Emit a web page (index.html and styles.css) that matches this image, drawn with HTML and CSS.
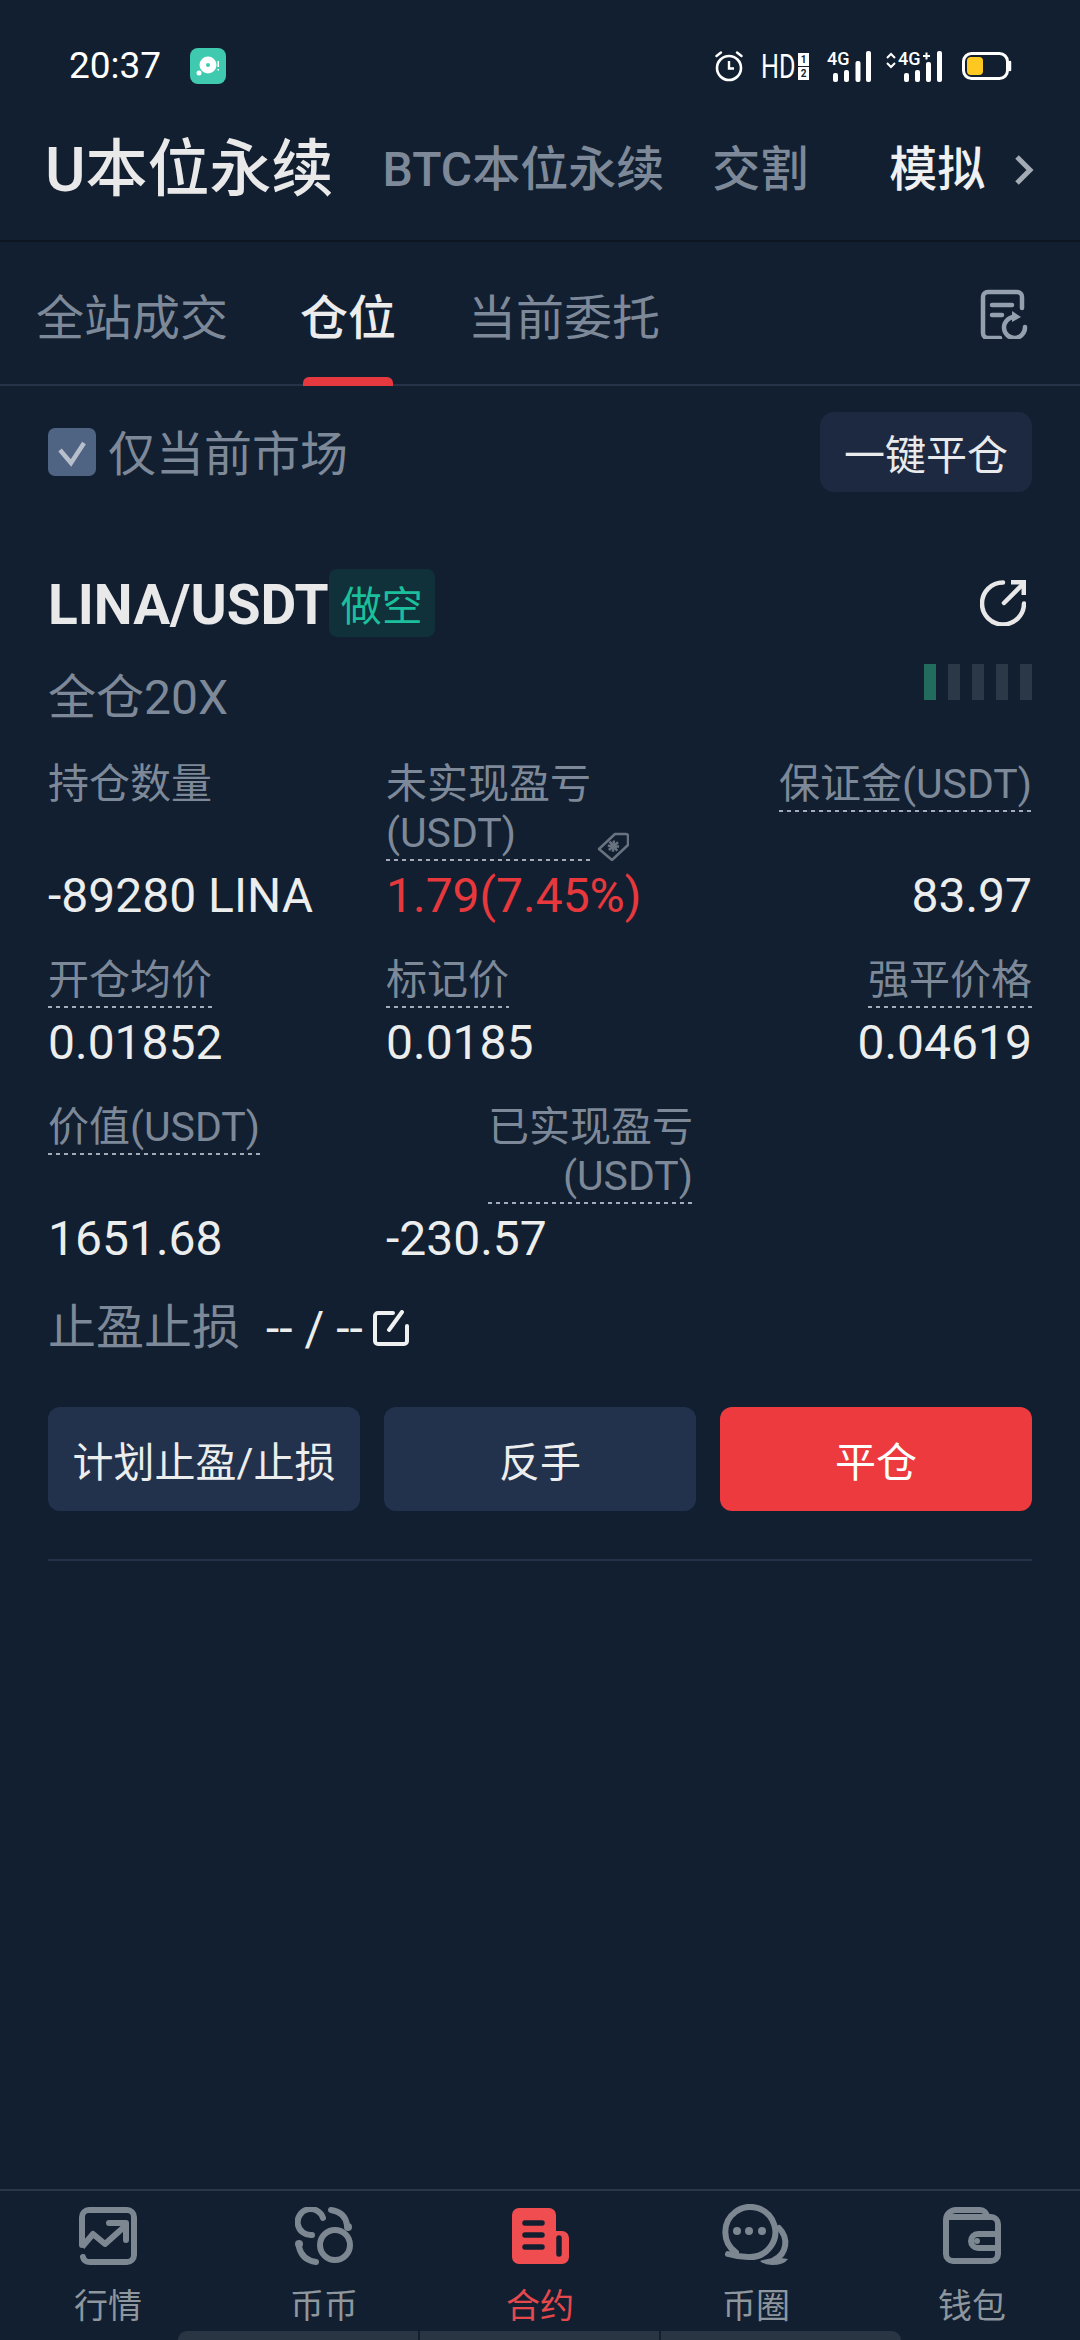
FILE: index.html
```html
<!DOCTYPE html>
<html lang="zh">
<head>
<meta charset="utf-8">
<title>仓位</title>
<link rel="stylesheet" href="styles.css">
</head>
<body>
<div class="page">
  <header class="status">
    <div class="status-left">
      <span class="time">20:37</span>
      <svg class="app-icon" viewBox="0 0 36 36"><rect width="36" height="36" rx="8" fill="#3fcab0"/><circle cx="18" cy="17" r="8.5" fill="#fff"/><circle cx="18" cy="17" r="2" fill="#3fcab0"/><circle cx="9" cy="25" r="2.5" fill="#fff"/><rect x="27.500" y="13" width="1.500" height="6" fill="#fff"/><rect x="27.500" y="21" width="1.500" height="1.500" fill="#fff"/></svg>
    </div>
    <div class="status-right">
      <svg class="ico-alarm" viewBox="0 0 28 32"><circle cx="14" cy="18" r="12" fill="none" stroke="#fff" stroke-width="2.600"/><path d="M14 11v7.500h5" fill="none" stroke="#fff" stroke-width="2.400"/><path d="M1.500 6 6 2.500M26.500 6 22 2.500" stroke="#fff" stroke-width="2.400" stroke-linecap="round"/></svg>
      <div class="hd"><span class="hd-text">HD</span><div class="sim"><b>1</b><b>2</b></div></div>
      <div class="sig sig-a">
        <span class="net">4G</span>
        <svg viewBox="0 0 46 31"><g fill="#fff"><rect x="6" y="22" width="5" height="9" rx="2"/><rect x="17" y="19" width="5" height="12" rx="2"/><rect x="28.500" y="10" width="5" height="21" rx="2"/><rect x="39" y="0" width="5" height="31" rx="2"/></g></svg>
      </div>
      <div class="sig sig-b">
        <span class="net">4G</span>
        <svg viewBox="0 0 58 31"><path d="M1 7 5 3l4 4M1 12l4 4 4-4" fill="none" stroke="#fff" stroke-width="2"/><path d="M37 5h7M40.500 1.500v7" stroke="#fff" stroke-width="2"/><g fill="#fff"><rect x="18" y="22" width="5" height="9" rx="2"/><rect x="29" y="19" width="5" height="12" rx="2"/><rect x="40" y="11" width="5" height="20" rx="2"/><rect x="51" y="0" width="5" height="31" rx="2"/></g></svg>
      </div>
      <svg class="ico-bat" viewBox="0 0 50 28"><rect x="1.500" y="1.500" width="44" height="25" rx="8" fill="none" stroke="#fff" stroke-width="3"/><rect x="5" y="5" width="16" height="18" rx="4" fill="#fdc921"/><path d="M48 10v8" stroke="#fff" stroke-width="2.500" stroke-linecap="round"/></svg>
    </div>
  </header>

  <nav class="topnav">
    <span class="top-main">U本位永续</span>
    <span class="top-item top-btc">BTC本位永续</span>
    <span class="top-item top-jg">交割</span>
    <span class="top-sim">模拟</span>
    <svg class="top-chev" viewBox="0 0 22 34"><path d="M4 4l13 13L4 30" fill="none" stroke="#a3abb5" stroke-width="5"/></svg>
  </nav>

  <div class="tabs">
    <div class="tab"><span>全站成交</span><i class="tab-bar"></i></div>
    <div class="tab tab-on"><span>仓位</span><i class="tab-bar"></i></div>
    <div class="tab"><span>当前委托</span><i class="tab-bar"></i></div>
    <svg class="tab-ico" viewBox="0 0 48 50"><g fill="none" stroke="#94a0ae" stroke-width="4.500" stroke-linecap="round" stroke-linejoin="round"><path d="M42 19V8a5 5 0 0 0-5-5H8a5 5 0 0 0-5 5v36a5 5 0 0 0 5 5h12"/><path d="M12 16h20M12 26h10"/><path d="M45 38a10.500 10.500 0 1 1-11-10"/></g><path d="M32 22l9 6-9 5z" fill="#94a0ae"/></svg>
  </div>

  <div class="filter">
    <label class="check">
      <svg class="check-box" viewBox="0 0 48 48"><rect width="48" height="48" rx="7" fill="#4f6382"/><path d="M12 22l11 13 13-20" fill="none" stroke="#b7bfca" stroke-width="4.500"/></svg>
      <span class="check-text">仅当前市场</span>
    </label>
    <button class="close-all">一键平仓</button>
  </div>

  <section class="pos">
    <div class="pos-head">
      <div class="pair"><span class="pair-name">LINA/USDT</span><span class="badge">做空</span></div>
      <svg class="share" viewBox="0 0 46 46"><g fill="none" stroke="#e8e8e8" stroke-width="4.500" stroke-linecap="round"><path d="M23 2.500A21 21 0 1 0 44 23.500"/><path d="M24 23 43 4"/></g><path d="M31 0h15v15h-4.500V4.500H31z" fill="#e8e8e8"/></svg>
    </div>
    <div class="lev-row">
      <span class="lev">全仓20X</span>
      <div class="risk"><i class="risk-on"></i><i></i><i></i><i></i><i></i></div>
    </div>

    <div class="row row-first">
      <div class="cell cell-a"><span class="lab">持仓数量</span><span class="val">-89280 LINA</span></div>
      <div class="cell cell-b">
        <div class="lab-wrap"><span class="lab dash">未实现盈亏<br>(USDT)</span>
          <svg class="tag" viewBox="0 0 32 30"><g fill="none" stroke="#68737f" stroke-width="2.500" stroke-linejoin="round"><path d="M2 18 18 3h11a2 2 0 0 1 2 2v9L15 29z"/></g><path d="M11 11l8 8M19 11l-8 8M15 9v12M9 15h12" transform="rotate(-40 15 15) translate(1 1)" stroke="#68737f" stroke-width="2.500"/></svg>
        </div>
        <span class="val red">1.79(7.45%)</span>
      </div>
      <div class="cell cell-c"><span class="lab dash">保证金(USDT)</span><span class="val">83.97</span></div>
    </div>

    <div class="row">
      <div class="cell cell-a"><span class="lab dash">开仓均价</span><span class="val">0.01852</span></div>
      <div class="cell cell-b"><span class="lab dash">标记价</span><span class="val">0.0185</span></div>
      <div class="cell cell-c"><span class="lab dash">强平价格</span><span class="val">0.04619</span></div>
    </div>

    <div class="row">
      <div class="cell cell-a"><span class="lab dash">价值(USDT)</span><span class="val">1651.68</span></div>
      <div class="cell cell-b"><span class="lab dash lab-shift">已实现盈亏<br>(USDT)</span><span class="val">-230.57</span></div>
      <div class="cell cell-c"></div>
    </div>

    <div class="stop">
      <span class="stop-lab">止盈止损</span>
      <span class="stop-val">-- / --</span>
      <svg class="edit" viewBox="0 0 36 36"><g fill="none" stroke="#eef0f2" stroke-width="4" stroke-linecap="round"><path d="M20 3H5a3 3 0 0 0-3 3v25a3 3 0 0 0 3 3h26a3 3 0 0 0 3-3V16"/><path d="M16 20 29 2"/></g></svg>
    </div>

    <div class="actions">
      <button class="act">计划止盈/止损</button>
      <button class="act">反手</button>
      <button class="act act-red">平仓</button>
    </div>
    <div class="pos-line"></div>
  </section>

  <div class="spacer"></div>

  <footer class="nav">
    <div class="nav-items">
      <div class="nav-item">
        <svg class="nav-ico" viewBox="0 0 58 58"><g fill="none" stroke="#7c8791" stroke-width="6" stroke-linecap="round" stroke-linejoin="round"><path d="M3 38V10a7 7 0 0 1 7-7h38a7 7 0 0 1 7 7v38a7 7 0 0 1-7 7H11q-6 0-7-5"/><path d="M45 20 26 37 14 27 3 40" stroke-linecap="butt"/><path d="M30 16h17v17"/></g></svg>
        <span>行情</span>
      </div>
      <div class="nav-item">
        <svg class="nav-ico" viewBox="0 0 58 58"><g fill="none" stroke="#7c8791" stroke-width="6" stroke-linecap="round"><circle cx="40" cy="38" r="15"/><path d="M28 11A13 13 0 1 0 17 28"/><path d="M36 3q14 2 16 15"/><path d="M4 40q3 13 17 15"/></g><circle cx="53" cy="20" r="4" fill="#7c8791"/><circle cx="4" cy="37" r="4" fill="#7c8791"/></svg>
        <span>币币</span>
      </div>
      <div class="nav-item nav-on">
        <svg class="nav-ico" viewBox="0 0 58 58"><path d="M8 1h30a7 7 0 0 1 7 7v16h6a7 7 0 0 1 7 7v19a7 7 0 0 1-7 7H8a7 7 0 0 1-7-7V8a7 7 0 0 1 7-7z" fill="#f04d50"/><g stroke="#121f30" stroke-width="5.500" stroke-linecap="round"><path d="M14 16h17M14 28h17M14 40h17"/><path d="M48 31v16"/></g></svg>
        <span>合约</span>
      </div>
      <div class="nav-item">
        <svg class="nav-ico nav-ico-wide" viewBox="0 0 68 62"><g fill="none" stroke="#7c8791" stroke-width="6" stroke-linecap="round"><path d="M14 48.500A25 25 0 1 1 28 53"/><path d="M6 50q10 3 20 3"/><path d="M57 24c10 10 8 26-5 32"/></g><path d="M38 57q14-5 28-2-4 6-16 6-8 0-12-4z" fill="#7c8791"/><g fill="#7c8791"><circle cx="15" cy="27" r="4"/><circle cx="27" cy="27" r="4"/><circle cx="40" cy="27" r="4"/></g></svg>
        <span>币圈</span>
      </div>
      <div class="nav-item">
        <svg class="nav-ico" viewBox="0 0 58 58"><g fill="none" stroke="#7c8791" stroke-width="6" stroke-linejoin="round"><path d="M3 13V47a7 7 0 0 0 7 7h38a7 7 0 0 0 7-7V17a7 7 0 0 0-7-7H3"/><path d="M3 13a10 10 0 0 1 10-10h24a7 7 0 0 1 7 7"/><path d="M56 30H35a6 6 0 0 0 0 14h21" transform="translate(0 -3)"/></g><circle cx="34" cy="34" r="3" fill="#7c8791"/></svg>
        <span>钱包</span>
      </div>
    </div>
    <div class="home"><i></i><i></i><i></i></div>
  </footer>
</div>
</body>
</html>
```

FILE: styles.css
```css
* { box-sizing: border-box; }
html, body { margin: 0; padding: 0; }
body {
  background: #121f30;
  font-family: Roboto, "Noto Sans CJK SC", sans-serif;
  color: #e8e9eb;
}
.page { width: 1080px; height: 2340px; display: flex; flex-direction: column; overflow: hidden; }
i { display: block; }

/* status bar */
.status { height: 130px; flex: none; display: flex; justify-content: space-between; align-items: center; padding: 2px 68px 0 69px; }
.status-left { display: flex; align-items: center; gap: 29px; }
.time { font-size: 37px; color: #fff; line-height: 44px; }
.app-icon { width: 36px; height: 36px; display: block; }
.status-right { display: flex; align-items: center; }
.status-right svg { display: block; }
.ico-alarm { width: 28px; height: 32px; margin-right: 18px; }
.hd { display: flex; align-items: center; gap: 3px; margin-right: 18px; height: 30px; }
.hd-text { display: block; width: 34px; font-size: 34px; line-height: 30px; color: #fff; transform: scaleX(.74); transform-origin: left center; white-space: nowrap; }
.sim { display: flex; flex-direction: column; gap: 1px; }
.sim b { display: block; width: 11px; height: 13px; background: #fff; color: #121f30; font-size: 10px; line-height: 13px; text-align: center; }
.sig { position: relative; height: 31px; }
.sig-a { width: 46px; margin-right: 13px; }
.sig-b { width: 58px; margin-right: 18px; }
.sig svg { width: 100%; height: 31px; }
.net { position: absolute; top: -3px; font-size: 18px; line-height: 21px; font-weight: 500; color: #fff; }
.sig-a .net { left: 0; }
.sig-b .net { left: 12px; }
.ico-bat { width: 50px; height: 28px; }

/* top navigation */
.topnav { height: 112px; flex: none; display: flex; align-items: center; padding: 0 0 30px 45px; border-bottom: 2px solid #0c1622; }
.top-main { font-size: 62px; font-weight: 500; line-height: 80px; color: #e9e9ea; }
.top-item { font-size: 48px; line-height: 60px; color: #7d8998; font-weight: 500; }
.top-btc { margin-left: 49px; }
.top-jg { margin-left: 48px; }
.top-sim { margin-left: 81px; font-size: 48px; line-height: 60px; font-weight: 500; color: #eff0f1; }
.top-chev { width: 22px; height: 34px; margin-left: 28px; display: block; }

/* tabs */
.tabs { height: 144px; flex: none; display: flex; gap: 72px; align-items: flex-start; padding: 47px 52px 0 36px; border-bottom: 2px solid #253247; }
.tab { display: flex; flex-direction: column; align-items: center; font-size: 48px; line-height: 60px; color: #7d8998; }
.tab-on { color: #ececed; font-weight: 500; }
.tab-bar { width: 90px; height: 9px; margin-top: 28px; border-radius: 6px 6px 0 0; }
.tab-on .tab-bar { background: #e5383f; }
.tab-ico { width: 48px; height: 50px; margin-left: auto; display: block; }

/* filter */
.filter { flex: none; display: flex; justify-content: space-between; align-items: center; padding: 26px 48px 0; }
.check { display: flex; align-items: center; gap: 12px; font-size: 48px; line-height: 60px; color: #7d8998; }
.check-text { padding-top: 5px; }
.check-box { width: 48px; height: 48px; display: block; }
.close-all { width: 212px; height: 80px; border: 0; border-radius: 14px; background: #1c2941; color: #e9eaec; font: 400 41px Roboto, "Noto Sans CJK SC", sans-serif; padding: 0; }

/* position card */
.pos { flex: none; padding: 77px 48px 0; }
.pos-head { display: flex; justify-content: space-between; align-items: center; height: 68px; }
.pair { display: flex; align-items: center; }
.pair-name { font-size: 55px; font-weight: 700; line-height: 68px; padding-top: 3px; color: #e9e9ea; }
.badge { width: 106px; height: 68px; display: flex; align-items: center; justify-content: center; border-radius: 8px; background: #10303a; color: #1cbf9b; font-size: 41px; }
.share { width: 46px; height: 46px; margin-right: 6px; display: block; }
.lev-row { margin-top: 27px; display: flex; justify-content: space-between; align-items: flex-start; }
.lev { font-size: 48px; line-height: 68px; color: #7d8998; }
.risk { display: flex; gap: 12px; }
.risk i { width: 12px; height: 36px; background: #2b3848; }
.risk .risk-on { background: #216c5c; }

.row { display: flex; margin-top: 30px; }
.row-first { margin-top: 28px; }
.cell { display: flex; flex-direction: column; justify-content: space-between; align-items: flex-start; }
.cell-a { width: 338px; }
.cell-b { width: 300px; }
.cell-c { flex: 1; align-items: flex-end; text-align: right; }
.lab { display: inline-block; font-size: 41px; line-height: 49px; color: #7d8998; padding-bottom: 3px; white-space: nowrap; }
.dash { background: repeating-linear-gradient(90deg, #a2abb7 0 4px, transparent 4px 8px) left bottom / 100% 2px no-repeat; }
.lab-wrap { display: flex; align-items: flex-end; gap: 6px; }
.lab-shift { margin-left: 102px; text-align: right; }
.tag { width: 32px; height: 30px; display: block; }
.val { display: block; font-size: 48px; line-height: 60px; margin-top: 5px; color: #eceded; }
.red { color: #e6383d; }

.stop { margin-top: 29px; display: flex; align-items: center; height: 60px; }
.stop-lab { font-size: 48px; line-height: 60px; color: #7d8998; }
.stop-val { margin-left: 26px; font-size: 48px; color: #eceded; }
.edit { width: 36px; height: 36px; margin-left: 10px; display: block; }

.actions { margin-top: 49px; display: flex; gap: 24px; }
.act { flex: 1; height: 104px; border: 0; border-radius: 12px; background: #22324d; color: #eceded; font: 400 41px Roboto, "Noto Sans CJK SC", sans-serif; padding: 0; }
.act-red { background: #ec3a3e; color: #fff; }
.pos-line { margin-top: 48px; height: 2px; background: #24314a; }

.spacer { flex: 1; }

/* bottom nav */
.nav { flex: none; border-top: 2px solid #2a3749; }
.nav-items { display: flex; height: 140px; padding-top: 16px; }
.nav-item { flex: 1; display: flex; flex-direction: column; align-items: center; font-size: 34px; line-height: 40px; color: #8e969e; }
.nav-on { color: #e5484d; }
.nav-ico { width: 58px; height: 58px; display: block; margin-bottom: 21px; }
.nav-ico-wide { width: 68px; height: 62px; margin-top: -3px; margin-bottom: 20px; }
.home { height: 9px; margin: 0 179px 0 178px; display: flex; gap: 2px; }
.home i { flex: 1; background: #2a3544; }
.home i:first-child { border-radius: 10px 0 0 0; }
.home i:last-child { border-radius: 0 10px 0 0; }
```
